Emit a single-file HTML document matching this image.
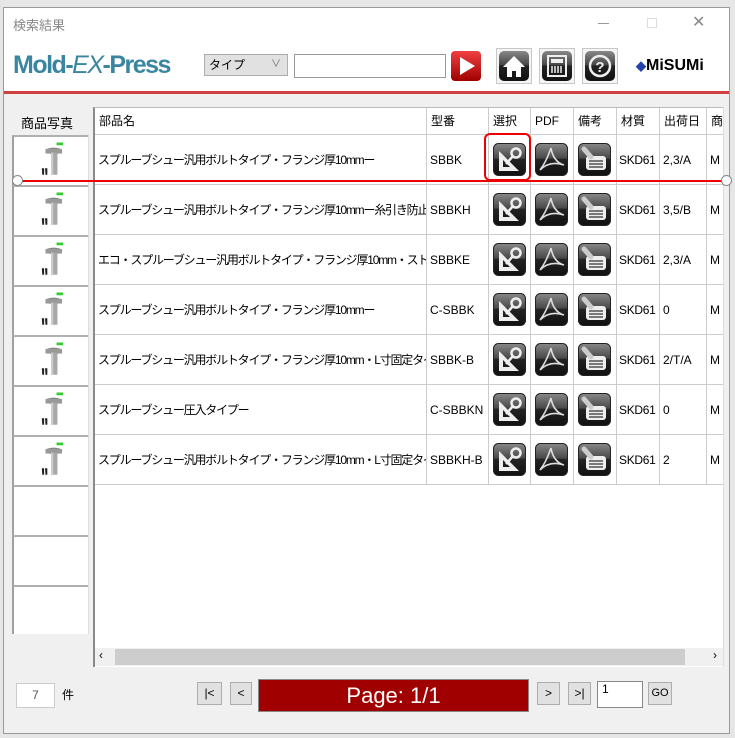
<!DOCTYPE html>
<html><head><meta charset="utf-8"><style>
*{box-sizing:border-box;margin:0;padding:0}
body{width:735px;height:738px;background:#e6e6e6;position:relative;overflow:hidden;font-family:"Liberation Sans","Noto Sans CJK JP",sans-serif;font-size:12px;color:#000}
.a{position:absolute}
.win{left:3px;top:7px;width:727px;height:727px;background:#f0f0f0;border:1px solid #9a9a9a}
.top{left:4px;top:8px;width:725px;height:84px;background:#fff}
.ic{width:36px;height:36px;border:1px solid #c8c8c8;background:#f4f4f4;padding:2px}
.grid{left:93px;top:107px;width:630px;height:560px;background:#fff;border-left:2px solid #8a8a8a;border-top:1px solid #bbb}
.hd{top:0;height:27px;background:#fff;border-bottom:1px solid #ccc;line-height:27px;padding-left:4px;border-right:1px solid #ccc;font-size:12px}
.cell{height:50px;line-height:50px;padding-left:3px;border-right:1px solid #ccc;border-bottom:1px solid #ccc;white-space:nowrap;overflow:hidden;font-size:12px}
.nm{letter-spacing:-1.2px}
.th{left:12px;width:76px;height:50px;background:#fff;border-left:2px solid #a0a0a0;border-top:2px solid #b0b0b0}
.btn{height:23px;border:1px solid #adadad;background:#e1e1e1;text-align:center;line-height:21px;font-size:12px}
</style></head><body>
<svg width="0" height="0" style="position:absolute">
<defs>
<linearGradient id="g" x1="0" y1="0" x2="0" y2="1"><stop offset="0" stop-color="#888"/><stop offset=".45" stop-color="#4a4a4a"/><stop offset=".5" stop-color="#222"/><stop offset="1" stop-color="#111"/></linearGradient>
<linearGradient id="r" x1="0" y1="0" x2="0" y2="1"><stop offset="0" stop-color="#f04040"/><stop offset="1" stop-color="#a00000"/></linearGradient>
<symbol id="sel" viewBox="0 0 33 33"><rect x="0.5" y="0.5" width="32" height="32" rx="5" fill="url(#g)" stroke="#222"/><path d="M6 8 L6 28 L26 28 Z M10 17 L10 24 L17 24 Z" fill="#eee" fill-rule="evenodd"/><circle cx="23" cy="10" r="4.5" fill="none" stroke="#eee" stroke-width="2.5"/><path d="M20 13 L13 21" stroke="#eee" stroke-width="2.5"/></symbol>
<symbol id="pdf" viewBox="0 0 33 33"><rect x="0.5" y="0.5" width="32" height="32" rx="5" fill="url(#g)" stroke="#222"/><path d="M16 5 C14 10 12 18 5 27 M16 5 C17 12 21 20 29 22 M5 27 C12 20 20 19 29 22" fill="none" stroke="#ddd" stroke-width="1.6"/></symbol>
<symbol id="memo" viewBox="0 0 33 33"><rect x="0.5" y="0.5" width="32" height="32" rx="5" fill="url(#g)" stroke="#222"/><rect x="8" y="13" width="20" height="14" rx="3" fill="#eee"/><path d="M11 18h14M11 21h14M11 24h14" stroke="#333" stroke-width="1.3"/><path d="M6 6 L13 14" stroke="#ccc" stroke-width="5" stroke-linecap="round"/></symbol>
<symbol id="bolt" viewBox="0 0 50 50"><rect x="31" y="6" width="7" height="3" fill="#3c3"/><ellipse cx="28" cy="15" rx="9" ry="3.5" fill="#888"/><rect x="19" y="13" width="18" height="5" fill="#999"/><rect x="25" y="17" width="7" height="24" fill="#a8a8a8"/><rect x="25" y="17" width="2.5" height="24" fill="#ccc"/><path d="M15 34h2.5v7h-2zM18.5 34h2.5v7h-2z" fill="#222"/></symbol>
</defs></svg>
<div class="a win"></div>
<div class="a top"></div>
<div class="a" style="left:13px;top:15px;font-size:13px;color:#888">検索結果</div>
<div class="a" style="left:598px;top:23px;width:11px;height:1px;background:#999"></div>
<div class="a" style="left:647px;top:18px;width:10px;height:10px;border:1px solid #ddd"></div>
<div class="a" style="left:692px;top:12px;font-size:16px;color:#888">✕</div>
<div class="a" style="left:13px;top:51px;font-size:25px;font-weight:bold;color:#3a86a0;letter-spacing:-1.5px;font-family:'Liberation Sans Narrow','Liberation Sans',sans-serif">Mold-<i style="font-weight:normal">EX</i>-Press</div>
<div class="a" style="left:204px;top:54px;width:84px;height:22px;background:#e1e1e1;border:1px solid #adadad;padding-left:4px;line-height:20px;font-size:12px">タイプ<span style="position:absolute;right:6px;color:#666;font-size:10px">∨</span></div>
<div class="a" style="left:294px;top:54px;width:152px;height:24px;background:#fff;border:1px solid #999"></div>
<svg class="a" style="left:450px;top:50px" width="32" height="32"><rect x="1" y="1" width="30" height="30" rx="4" fill="url(#r)"/><path d="M10 7 L25 16 L10 25Z" fill="#fff"/></svg>
<div class="a ic" style="left:496px;top:48px"><svg width="30" height="30"><rect x="0" y="0" width="30" height="30" rx="5" fill="url(#g)"/><path d="M15 5 L4 16 H8 V26 H13 V20 H17 V26 H22 V16 H26Z" fill="#fff"/></svg></div>
<div class="a ic" style="left:539px;top:48px"><svg width="30" height="30"><rect x="0" y="0" width="30" height="30" rx="5" fill="url(#g)"/><rect x="6" y="5" width="18" height="20" fill="none" stroke="#eee" stroke-width="2"/><rect x="9" y="8" width="12" height="4" fill="#eee"/><path d="M10 15v7M13 15v7M16 15v7M19 15v7" stroke="#eee" stroke-width="1.5"/></svg></div>
<div class="a ic" style="left:582px;top:48px"><svg width="30" height="30"><rect x="0" y="0" width="30" height="30" rx="5" fill="url(#g)"/><circle cx="15" cy="15" r="10" fill="none" stroke="#eee" stroke-width="2.5"/><text x="15" y="21" font-size="15" font-weight="bold" fill="#eee" text-anchor="middle" font-family="Liberation Sans">?</text></svg></div>
<div class="a" style="left:636px;top:57px;font-size:16px;font-weight:bold;font-family:'Liberation Sans',sans-serif"><span style="color:#24a;font-size:13px">◆</span>MiSUMi</div>
<div class="a" style="left:4px;top:91px;width:725px;height:3px;background:#d04040"></div>
<div class="a" style="left:21px;top:113px;font-size:13px">商品写真</div>
<div class="a" style="left:88px;top:134px;width:1px;height:500px;background:#ddd"></div>
<div class="a th" style="top:135px"><svg width="50" height="46" viewBox="0 0 50 50" style="margin-left:12px"><use href="#bolt"/></svg></div>
<div class="a th" style="top:185px"><svg width="50" height="46" viewBox="0 0 50 50" style="margin-left:12px"><use href="#bolt"/></svg></div>
<div class="a th" style="top:235px"><svg width="50" height="46" viewBox="0 0 50 50" style="margin-left:12px"><use href="#bolt"/></svg></div>
<div class="a th" style="top:285px"><svg width="50" height="46" viewBox="0 0 50 50" style="margin-left:12px"><use href="#bolt"/></svg></div>
<div class="a th" style="top:335px"><svg width="50" height="46" viewBox="0 0 50 50" style="margin-left:12px"><use href="#bolt"/></svg></div>
<div class="a th" style="top:385px"><svg width="50" height="46" viewBox="0 0 50 50" style="margin-left:12px"><use href="#bolt"/></svg></div>
<div class="a th" style="top:435px"><svg width="50" height="46" viewBox="0 0 50 50" style="margin-left:12px"><use href="#bolt"/></svg></div>
<div class="a th" style="top:485px"></div>
<div class="a th" style="top:535px"></div>
<div class="a th" style="top:585px;height:49px"></div>
<div class="a grid">
<div class="a hd" style="left:0;width:332px">部品名</div>
<div class="a hd" style="left:332px;width:62px">型番</div>
<div class="a hd" style="left:394px;width:42px">選択</div>
<div class="a hd" style="left:436px;width:43px">PDF</div>
<div class="a hd" style="left:479px;width:43px">備考</div>
<div class="a hd" style="left:522px;width:43px">材質</div>
<div class="a hd" style="left:565px;width:47px">出荷日</div>
<div class="a hd" style="left:612px;width:18px;border-right:0">商</div>
<div class="a" style="left:0;top:27px;width:630px" id="rows">
</div>
<div class="a" style="left:0;top:540px;width:628px;height:18px;background:#f0f0f0"><div class="a" style="left:20px;top:1px;width:570px;height:16px;background:#cdcdcd"></div><span class="a" style="left:4px;top:0;font-size:12px">‹</span><span class="a" style="right:6px;top:0;font-size:12px">›</span></div>
</div>
<div class="a" style="left:723px;top:107px;width:6px;height:560px;background:#f0f0f0;border-left:1px solid #ddd"></div>
<div class="a" style="left:17px;top:180px;width:710px;height:2px;background:#e00"></div>
<div class="a" style="left:12px;top:175px;width:11px;height:11px;border-radius:50%;border:1.5px solid #888;background:#fff"></div>
<div class="a" style="left:721px;top:175px;width:11px;height:11px;border-radius:50%;border:1.5px solid #888;background:#fff"></div>
<div class="a" style="left:484px;top:133px;width:47px;height:48px;border:2.5px solid #e00;border-radius:6px"></div>
<div class="a" style="left:16px;top:683px;width:39px;height:25px;background:#fff;border:1px solid #ccc;text-align:center;line-height:23px;color:#555">7</div>
<div class="a" style="left:62px;top:686px">件</div>
<div class="a btn" style="left:197px;top:682px;width:25px">|&lt;</div>
<div class="a btn" style="left:230px;top:682px;width:22px">&lt;</div>
<div class="a" style="left:258px;top:679px;width:271px;height:33px;background:#a00000;border:1px solid #888;color:#fff;text-align:center;line-height:31px;font-size:22px">Page: 1/1</div>
<div class="a btn" style="left:537px;top:682px;width:23px">&gt;</div>
<div class="a btn" style="left:568px;top:682px;width:23px">&gt;|</div>
<div class="a" style="left:597px;top:681px;width:46px;height:27px;background:#fff;border:1px solid #888;padding-left:4px;font-size:12px">1</div>
<div class="a btn" style="left:648px;top:682px;width:24px;font-size:11px">GO</div>
<script>
var d=[["スプルーブシュー汎用ボルトタイプ・フランジ厚10mmー","SBBK","2,3/A"],["スプルーブシュー汎用ボルトタイプ・フランジ厚10mmー糸引き防止","SBBKH","3,5/B"],["エコ・スプルーブシュー汎用ボルトタイプ・フランジ厚10mm・ストレート","SBBKE","2,3/A"],["スプルーブシュー汎用ボルトタイプ・フランジ厚10mmー","C-SBBK","0"],["スプルーブシュー汎用ボルトタイプ・フランジ厚10mm・L寸固定タイプ","SBBK-B","2/T/A"],["スプルーブシュー圧入タイプー","C-SBBKN","0"],["スプルーブシュー汎用ボルトタイプ・フランジ厚10mm・L寸固定タイプ","SBBKH-B","2"]];
var h="";d.forEach(function(r,i){var t=i*50;
h+='<div class="a cell nm" style="left:0;top:'+t+'px;width:332px">'+r[0]+'</div>';
h+='<div class="a cell" style="left:332px;top:'+t+'px;width:62px">'+r[1]+'</div>';
h+='<div class="a cell" style="left:394px;top:'+t+'px;width:42px;padding:8px 0 0 4px;line-height:0"><svg width="33" height="33"><use href="#sel"/></svg></div>';
h+='<div class="a cell" style="left:436px;top:'+t+'px;width:43px;padding:8px 0 0 4px;line-height:0"><svg width="33" height="33"><use href="#pdf"/></svg></div>';
h+='<div class="a cell" style="left:479px;top:'+t+'px;width:43px;padding:8px 0 0 4px;line-height:0"><svg width="33" height="33"><use href="#memo"/></svg></div>';
h+='<div class="a cell" style="left:522px;top:'+t+'px;width:43px;padding-left:2px;letter-spacing:-0.3px">SKD61</div>';
h+='<div class="a cell" style="left:565px;top:'+t+'px;width:47px">'+r[2]+'</div>';
h+='<div class="a cell" style="left:612px;top:'+t+'px;width:18px;border-right:0">M</div>';});
document.getElementById("rows").innerHTML=h;
</script>
</body></html>
